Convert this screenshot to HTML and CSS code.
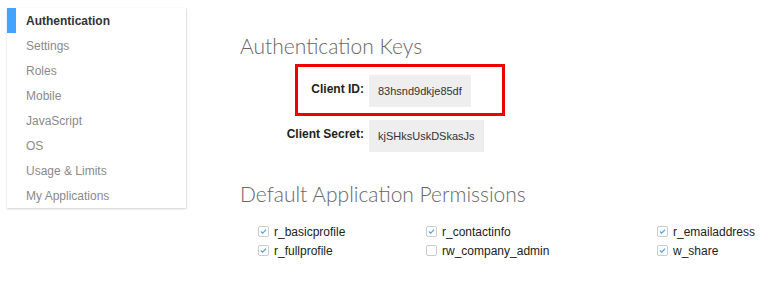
FILE: index.html
```html
<!DOCTYPE html>
<html>
<head>
<meta charset="utf-8">
<link rel="stylesheet" href="styles.css">
</head>
<body>
<div class="page">
  <nav class="sidebar">
    <a class="nav-item active">Authentication</a>
    <a class="nav-item">Settings</a>
    <a class="nav-item">Roles</a>
    <a class="nav-item">Mobile</a>
    <a class="nav-item">JavaScript</a>
    <a class="nav-item">OS</a>
    <a class="nav-item">Usage &amp; Limits</a>
    <a class="nav-item">My Applications</a>
  </nav>
  <main class="main">
    <h2 class="heading">Authentication Keys</h2>
    <div class="keys">
      <div class="highlight">
        <div class="key-row">
          <span class="key-label label-id">Client ID:</span>
          <span class="key-value">83hsnd9dkje85df</span>
        </div>
      </div>
      <div class="key-row row-secret">
        <span class="key-label label-secret">Client Secret:</span>
        <span class="key-value">kjSHksUskDSkasJs</span>
      </div>
    </div>
    <h2 class="heading heading-perms">Default Application Permissions</h2>
    <div class="perms">
      <label class="perm"><span class="box checked"><svg viewBox="0 0 11 11"><path d="M2.3 5.5 L4.5 7.6 L8.7 3.1"/></svg></span>r_basicprofile</label>
      <label class="perm"><span class="box checked"><svg viewBox="0 0 11 11"><path d="M2.3 5.5 L4.5 7.6 L8.7 3.1"/></svg></span>r_contactinfo</label>
      <label class="perm"><span class="box checked"><svg viewBox="0 0 11 11"><path d="M2.3 5.5 L4.5 7.6 L8.7 3.1"/></svg></span>r_emailaddress</label>
      <label class="perm"><span class="box checked"><svg viewBox="0 0 11 11"><path d="M2.3 5.5 L4.5 7.6 L8.7 3.1"/></svg></span>r_fullprofile</label>
      <label class="perm"><span class="box"></span>rw_company_admin</label>
      <label class="perm"><span class="box checked"><svg viewBox="0 0 11 11"><path d="M2.3 5.5 L4.5 7.6 L8.7 3.1"/></svg></span>w_share</label>
    </div>
  </main>
</div>
</body>
</html>
```

FILE: styles.css
```css
html, body {
  margin: 0;
  padding: 0;
  background: #fff;
}
body {
  font-family: "Liberation Sans", Arial, sans-serif;
  color: #333;
}
.page {
  display: flex;
  align-items: flex-start;
  padding: 8px 0 0 7px;
}
.sidebar {
  width: 179px;
  display: flex;
  flex-direction: column;
  background: #fff;
  box-shadow: 0 1px 2px rgba(0,0,0,0.18), 1px 0 1px rgba(0,0,0,0.06);
  margin-right: 54px;
}
.nav-item {
  display: block;
  height: 25px;
  line-height: 27px;
  padding-left: 19px;
  font-size: 12px;
  color: #8a8a8a;
}
.nav-item.active {
  font-weight: bold;
  color: #333;
  box-shadow: inset 9px 0 0 #43a3fd;
}
.main {
  flex: 1;
  padding-top: 26px;
}
.heading {
  margin: 0;
  font-family: Lato, "Liberation Sans", sans-serif;
  font-weight: 300;
  font-size: 21px;
  line-height: 24px;
  color: #666;
}
.keys {
  margin-top: 6px;
}
.highlight {
  width: 204px;
  margin-left: 55px;
  border: 3px solid #ee0000;
  padding: 8px 0 6px;
}
.key-row {
  display: flex;
  align-items: center;
}
.key-label {
  font-size: 12px;
  font-weight: bold;
  color: #222;
  text-align: right;
  margin-right: 5px;
  margin-bottom: 4px;
}
.label-id {
  width: 66px;
}
.row-secret {
  margin-top: 4px;
  margin-left: 44px;
}
.label-secret {
  width: 80px;
}
.key-value {
  display: inline-block;
  height: 32px;
  line-height: 32px;
  padding: 0 9px;
  background: #eeeeee;
  font-size: 11px;
  color: #333;
}
.heading-perms {
  margin-top: 30px;
}
.perms {
  display: grid;
  grid-template-columns: 168px 231px auto;
  margin: 16px 0 0 18px;
}
.perm {
  display: flex;
  align-items: center;
  height: 19px;
  font-size: 12px;
  color: #222;
}
.box {
  width: 11px;
  height: 11px;
  border: 1px solid #cbcbcb;
  border-radius: 2px;
  margin-right: 5px;
  box-sizing: border-box;
  display: inline-flex;
  flex: none;
}
.box svg {
  width: 9px;
  height: 9px;
}
.box svg path {
  fill: none;
  stroke: #4a9fe8;
  stroke-width: 1.4;
}
```
